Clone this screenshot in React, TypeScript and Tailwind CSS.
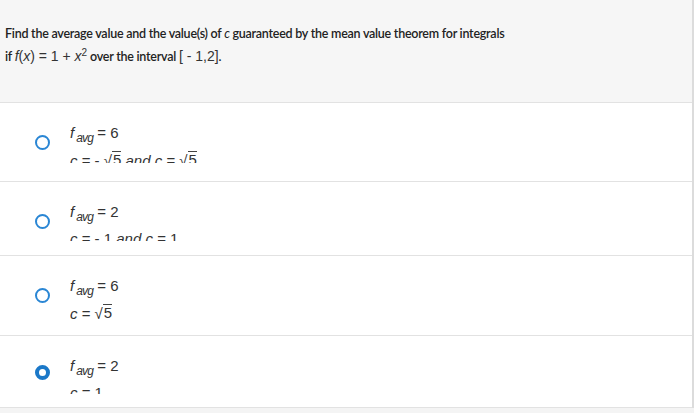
import React from 'react';

type Option = {
  avg: string;
  c: React.ReactNode;
  clip: number; // height of the box that cuts the second line, px
  rowH: number;
  radioTop: number;
  selected?: boolean;
};

const Sqrt: React.FC<{ n: string }> = ({ n }) => (
  <span className="inline-flex items-end">
    <span className="text-[15px] leading-none">√</span>
    <span className="border-t border-[#444] leading-[16px] pl-[1px]">{n}</span>
  </span>
);

const options: Option[] = [
  {
    avg: '6',
    c: (
      <>
        <i>c</i> = - <Sqrt n="5" /> <i>and</i> <i>c</i> = <Sqrt n="5" />
      </>
    ),
    clip: 16,
    rowH: 79,
    radioTop: 32,
  },
  {
    avg: '2',
    c: (
      <>
        <i>c</i> = - 1 <i>and</i> <i>c</i> = 1
      </>
    ),
    clip: 15,
    rowH: 74,
    radioTop: 32,
  },
  {
    avg: '6',
    c: (
      <>
        <i>c</i> = <Sqrt n="5" />
      </>
    ),
    clip: 26,
    rowH: 80,
    radioTop: 32,
  },
  {
    avg: '2',
    c: (
      <>
        <i>c</i> = 1
      </>
    ),
    clip: 14,
    rowH: 72,
    radioTop: 29,
    selected: true,
  },
];

const Radio: React.FC<{ selected?: boolean }> = ({ selected }) =>
  selected ? (
    <span className="block w-[15px] h-[15px] rounded-full border-[4px] border-[#1b78c8] bg-white" />
  ) : (
    <span className="block w-[15px] h-[15px] rounded-full border-2 border-[#2a86d4] bg-white" />
  );

const mathFont = { fontFamily: '"Liberation Sans", Arial, sans-serif' };

export default function App() {
  return (
    <div className="w-[694px] h-[413px] bg-[#f4f4f4] overflow-hidden">
      <div className="w-[694px] border-r-2 border-[#dcdcdc]">
        <div
          className="h-[103px] bg-[#f6f6f6] border-b border-[#e2e2e2] px-[5px] pt-[22px] text-[12.5px] leading-[23px] font-semibold tracking-[-0.25px] text-[#222]"
          style={{ fontFamily: 'Lato, "Open Sans", sans-serif' }}
        >
          <p>
            Find the average value and the value(s) of <i className="font-normal">c</i> guaranteed by the mean value
            theorem for integrals
          </p>
          <p>
            if{' '}
            <span className="font-normal text-[14px] tracking-normal text-[#333]" style={mathFont}>
              <i>f</i>(<i>x</i>) = 1 + <i>x</i>
              <sup className="text-[10px]">2</sup>
            </span>{' '}
            over the interval{' '}
            <span className="font-normal text-[14px] tracking-normal text-[#333]" style={mathFont}>
              [ - 1,2]
            </span>
            .
          </p>
        </div>

        {options.map((o, i) => (
          <div
            key={i}
            className="flex items-start bg-white border-b border-[#e2e2e2] pl-[35px]"
            style={{ height: o.rowH }}
          >
            <div style={{ marginTop: o.radioTop }}>
              <Radio selected={o.selected} />
            </div>
            <div className="ml-[20px] pt-[20px] text-[15px] text-[#333]" style={mathFont}>
              <div className="h-[24px] leading-[20px] whitespace-nowrap">
                <i>f</i>
                <i className="ml-[2px] text-[12px] relative top-[4px] tracking-[-0.8px]">avg</i> = {o.avg}
              </div>
              <div className="overflow-hidden" style={{ height: o.clip }}>
                <div className="pt-[4px] leading-[18px] whitespace-nowrap">{o.c}</div>
              </div>
            </div>
          </div>
        ))}
      </div>
    </div>
  );
}
